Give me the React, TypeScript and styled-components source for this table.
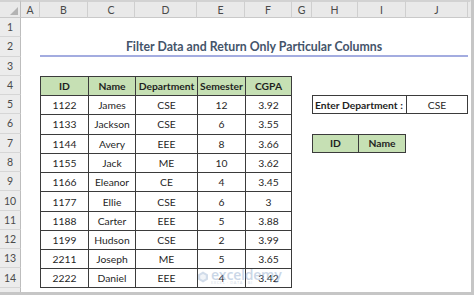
import React from "react";
import styled, { createGlobalStyle, css } from "styled-components";

const GlobalStyle = createGlobalStyle`
  html, body { margin: 0; padding: 0; background: #ffffff; }
  body { width: 474px; height: 295px; overflow: hidden; font-family: Lato, "Open Sans", sans-serif; }
`;

const COLS = "21px 19px 48px 47px 62px 48px 47px 20px 46px 48px 62px 3px";
const ROW_H = 19.27;
const LETTERS = ["A", "B", "C", "D", "E", "F", "G", "H", "I", "J", ""];

const Window = styled.div`
  width: 474px;
  height: 295px;
  display: flex;
  flex-direction: column;
  overflow: hidden;
`;

const Main = styled.div`
  display: flex;
  height: 292px;
  overflow: hidden;
`;

const Sheet = styled.div`
  width: 471px;
  display: flex;
  flex-direction: column;
`;

const VEdge = styled.div`
  width: 3px;
  background: #c6c6c6;
`;

const HEdge = styled.div`
  height: 3px;
  background: #c6c6c6;
`;

const Row = styled.div<{ $h: number }>`
  display: grid;
  grid-template-columns: ${COLS};
  height: ${(p) => p.$h}px;
  flex: none;
`;

const ColHead = styled.div<{ $last?: boolean }>`
  background: #e9e9e9;
  border-top: 2px solid #d2d2d2;
  border-bottom: 1px solid #c9c9c9;
  border-right: 1px solid ${(p) => (p.$last ? "transparent" : "#cfcfcf")};
  box-sizing: border-box;
  display: flex;
  align-items: center;
  justify-content: center;
  font-family: Lato, sans-serif;
  font-size: 10.5px;
  color: #4a4a4a;
`;

const Corner = styled(ColHead)`
  position: relative;
  border-right: 1px solid #bdbdbd;
`;

const CornerTriangle = styled.svg`
  position: absolute;
  right: 2px;
  bottom: 2px;
`;

const RowHead = styled.div`
  background: #ececec;
  border-bottom: 1px solid #d6d6d6;
  border-right: 1px solid #bdbdbd;
  box-sizing: border-box;
  display: flex;
  align-items: center;
  justify-content: center;
  font-family: Lato, sans-serif;
  font-size: 10.5px;
  color: #4a4a4a;
`;

const Cell = styled.div<{
  $box?: boolean;
  $green?: boolean;
  $bold?: boolean;
  $left?: boolean;
  $right?: boolean;
  $bottom?: boolean;
  $span?: number;
}>`
  box-sizing: border-box;
  display: flex;
  align-items: center;
  justify-content: ${(p) => (p.$left ? "flex-start" : "center")};
  padding-left: ${(p) => (p.$left ? "2px" : "0")};
  font-family: Lato, sans-serif;
  font-size: 10.3px;
  font-weight: ${(p) => (p.$bold ? 700 : 400)};
  color: #1f1f1f;
  white-space: nowrap;
  overflow: visible;
  background: ${(p) => (p.$green ? "#c6e0b4" : "transparent")};
  ${(p) => p.$span && css`grid-column: span ${p.$span};`}
  ${(p) =>
    p.$box &&
    css`
      border-left: 1px solid #3b3b3b;
      border-top: 1px solid #3b3b3b;
      ${p.$right ? "border-right: 1px solid #3b3b3b;" : ""}
      ${p.$bottom ? "border-bottom: 1px solid #3b3b3b;" : ""}
    `}
`;

const Title = styled.div`
  grid-column: span 9;
  box-sizing: border-box;
  border-bottom: 2px solid #a3ace0;
  display: flex;
  align-items: center;
  justify-content: center;
  font-family: Lato, sans-serif;
  font-weight: 700;
  font-size: 12.3px;
  color: #44546a;
  padding-top: 1px;
`;

const Watermark = styled.div`
  position: absolute;
  left: 197px;
  top: 268px;
  display: flex;
  align-items: center;
  gap: 2px;
  opacity: 0.4;
  pointer-events: none;
`;

const WmText = styled.div`
  display: flex;
  flex-direction: column;
  line-height: 1;
`;

const WmName = styled.span`
  font-family: "Open Sans", sans-serif;
  font-size: 14px;
  font-weight: 600;
  color: #7d9cc4;
  letter-spacing: -0.2px;
`;

const WmSub = styled.span`
  font-family: "Open Sans", sans-serif;
  font-size: 4px;
  color: #8aa0bd;
  letter-spacing: 0.6px;
  margin-top: -1px;
`;

const Stage = styled.div`
  position: relative;
`;

type Rec = { id: string; name: string; dept: string; sem: string; cgpa: string };

const data: Rec[] = [
  { id: "1122", name: "James", dept: "CSE", sem: "12", cgpa: "3.92" },
  { id: "1133", name: "Jackson", dept: "CSE", sem: "6", cgpa: "3.55" },
  { id: "1144", name: "Avery", dept: "EEE", sem: "8", cgpa: "3.66" },
  { id: "1155", name: "Jack", dept: "ME", sem: "10", cgpa: "3.62" },
  { id: "1166", name: "Eleanor", dept: "CE", sem: "4", cgpa: "3.45" },
  { id: "1177", name: "Ellie", dept: "CSE", sem: "6", cgpa: "3" },
  { id: "1188", name: "Carter", dept: "EEE", sem: "5", cgpa: "3.88" },
  { id: "1199", name: "Hudson", dept: "CSE", sem: "2", cgpa: "3.99" },
  { id: "2211", name: "Joseph", dept: "ME", sem: "5", cgpa: "3.65" },
  { id: "2222", name: "Daniel", dept: "EEE", sem: "4", cgpa: "3.42" },
];

const headers = ["ID", "Name", "Department", "Semester", "CGPA"];

function Blank({ n }: { n: number }) {
  return (
    <>
      {Array.from({ length: n }).map((_, i) => (
        <Cell key={i} />
      ))}
    </>
  );
}

function RightSide({ row }: { row: number }) {
  if (row === 5) {
    return (
      <>
        <Cell $box $bold $left $span={2} $bottom>
          Enter Department :
        </Cell>
        <Cell $box $right $bottom>
          CSE
        </Cell>
        <Cell />
      </>
    );
  }
  if (row === 7) {
    return (
      <>
        <Cell $box $green $bold $bottom>
          ID
        </Cell>
        <Cell $box $green $bold $bottom $right>
          Name
        </Cell>
        <Blank n={2} />
      </>
    );
  }
  return <Blank n={4} />;
}

export default function App() {
  return (
    <>
      <GlobalStyle />
      <Window>
        <Main>
          <Sheet>
            <Stage>
              <Row $h={18}>
                <Corner>
                  <CornerTriangle width="8" height="8" viewBox="0 0 8 8">
                    <polygon points="8,0 8,8 0,8" fill="#b3b3b3" />
                  </CornerTriangle>
                </Corner>
                {LETTERS.map((l, i) => (
                  <ColHead key={i} $last={i === LETTERS.length - 1}>
                    {l}
                  </ColHead>
                ))}
              </Row>
              {Array.from({ length: 15 }).map((_, idx) => {
                const r = idx + 1;
                let content: React.ReactNode;
                if (r === 2) {
                  content = (
                    <>
                      <Cell />
                      <Title>Filter Data and Return Only Particular Columns</Title>
                      <Cell />
                    </>
                  );
                } else if (r === 4) {
                  content = (
                    <>
                      <Cell />
                      {headers.map((h, i) => (
                        <Cell key={h} $box $green $bold $right={i === 4}>
                          {h}
                        </Cell>
                      ))}
                      <Blank n={5} />
                    </>
                  );
                } else if (r >= 5 && r <= 14) {
                  const d = data[r - 5];
                  const last = r === 14;
                  content = (
                    <>
                      <Cell />
                      <Cell $box $bottom={last}>{d.id}</Cell>
                      <Cell $box $bottom={last}>{d.name}</Cell>
                      <Cell $box $bottom={last}>{d.dept}</Cell>
                      <Cell $box $bottom={last}>{d.sem}</Cell>
                      <Cell $box $right $bottom={last}>{d.cgpa}</Cell>
                      <Cell />
                      <RightSide row={r} />
                    </>
                  );
                } else {
                  content = <Blank n={11} />;
                }
                return (
                  <Row key={r} $h={ROW_H}>
                    <RowHead>{r <= 14 ? r : ""}</RowHead>
                    {content}
                  </Row>
                );
              })}
              <Watermark>
                <svg width="12" height="12" viewBox="0 0 12 12">
                  <path d="M6 0.5 L11 3.5 L11 8.5 L6 11.5 L1 8.5 L1 3.5 Z" fill="#8fa9cc" />
                  <path d="M6 3 L8.8 4.6 L8.8 7.4 L6 9 L3.2 7.4 L3.2 4.6 Z" fill="#ffffff" opacity="0.7" />
                </svg>
                <WmText>
                  <WmName>exceldemy</WmName>
                  <WmSub>EXCEL · DATA · BI</WmSub>
                </WmText>
              </Watermark>
            </Stage>
          </Sheet>
          <VEdge />
        </Main>
        <HEdge />
      </Window>
    </>
  );
}
